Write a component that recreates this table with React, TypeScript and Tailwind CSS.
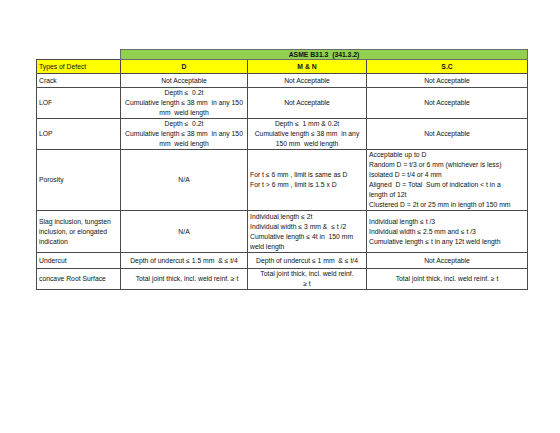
import React from "react";

const cell = "border border-[#4a4a4a] px-[2px] leading-[10px]";

function Lines({ lines }: { lines: string[] }) {
  return (
    <>
      {lines.map((l, i) => (
        <div key={i} className="whitespace-pre">
          {l}
        </div>
      ))}
    </>
  );
}

export default function App() {
  return (
    <div
      className="w-[560px] h-[433px] bg-white text-[#111] text-[6.8px] pt-[49px] pl-[36px]"
      style={{ fontFamily: '"Liberation Sans", Arial, sans-serif' }}
    >
      <table className="border-collapse table-fixed w-[491px]">
        <colgroup>
          <col className="w-[84px]" />
          <col className="w-[127px]" />
          <col className="w-[119px]" />
          <col className="w-[161px]" />
        </colgroup>
        <tbody>
          <tr className="h-[10px]">
            <td className="p-0" />
            <td
              colSpan={3}
              className="border border-[#6b6b6b] bg-[#92d050] text-center font-bold leading-[9px]"
            >
              ASME B31.3&nbsp; (341.3.2)
            </td>
          </tr>
          <tr className="h-[14px] bg-[#ffff00]">
            <td className={`${cell} font-normal`}>Types of Defect</td>
            <td className={`${cell} text-center font-bold`}>D</td>
            <td className={`${cell} text-center font-bold`}>M &amp; N</td>
            <td className={`${cell} text-center font-bold`}>S.C</td>
          </tr>
          <tr className="h-[14px]">
            <td className={cell}>Crack</td>
            <td className={`${cell} text-center`}>Not Acceptable</td>
            <td className={`${cell} text-center`}>Not Acceptable</td>
            <td className={`${cell} text-center`}>Not Acceptable</td>
          </tr>
          <tr className="h-[30px]">
            <td className={cell}>LOF</td>
            <td className={`${cell} text-center`}>
              <Lines lines={["Depth ≤  0.2t", "Cumulative length ≤ 38 mm  in any 150", "mm  weld length"]} />
            </td>
            <td className={`${cell} text-center`}>Not Acceptable</td>
            <td className={`${cell} text-center`}>Not Acceptable</td>
          </tr>
          <tr className="h-[31px]">
            <td className={cell}>LOP</td>
            <td className={`${cell} text-center`}>
              <Lines lines={["Depth ≤  0.2t", "Cumulative length ≤ 38 mm  in any 150", "mm  weld length"]} />
            </td>
            <td className={`${cell} text-center`}>
              <Lines lines={["Depth ≤  1 mm & 0.2t", "Cumulative length ≤ 38 mm  in any", "150 mm  weld length"]} />
            </td>
            <td className={`${cell} text-center`}>Not Acceptable</td>
          </tr>
          <tr className="h-[61px]">
            <td className={cell}>Porosity</td>
            <td className={`${cell} text-center`}>N/A</td>
            <td className={cell}>
              <Lines lines={["For t ≤ 6 mm , limit is same as D", "For t > 6 mm , limit is 1.5 x D"]} />
            </td>
            <td className={cell}>
              <Lines
                lines={[
                  "Acceptable up to D",
                  "Random D = t/3 or 6 mm (whichever is less)",
                  "Isolated D = t/4 or 4 mm",
                  "Aligned  D = Total  Sum of indication < t in a",
                  "length of 12t",
                  "Clustered D = 2t or 25 mm in length of 150 mm",
                ]}
              />
            </td>
          </tr>
          <tr className="h-[42px]">
            <td className={cell}>
              <Lines lines={["Slag inclusion, tungsten", "inclusion, or elongated", "indication"]} />
            </td>
            <td className={`${cell} text-center`}>N/A</td>
            <td className={cell}>
              <Lines
                lines={[
                  "Individual length ≤ 2t",
                  "Individual width ≤ 3 mm &  ≤ t /2",
                  "Cumulative length ≤ 4t in  150 mm",
                  "weld length",
                ]}
              />
            </td>
            <td className={cell}>
              <Lines
                lines={[
                  "Individual length ≤ t /3",
                  "Individual width ≤ 2.5 mm and ≤ t /3",
                  "Cumulative length ≤ t in any 12t weld length",
                ]}
              />
            </td>
          </tr>
          <tr className="h-[16px]">
            <td className={cell}>Undercut</td>
            <td className={`${cell} text-center whitespace-pre`}>Depth of undercut ≤ 1.5 mm  &amp; ≤ t/4</td>
            <td className={`${cell} text-center whitespace-pre`}>Depth of undercut ≤ 1 mm  &amp; ≤ t/4</td>
            <td className={`${cell} text-center`}>Not Acceptable</td>
          </tr>
          <tr className="h-[20px]">
            <td className={cell}>concave Root Surface</td>
            <td className={`${cell} text-center pl-[8px]`}>Total joint thick, incl. weld reinf. ≥ t</td>
            <td className={`${cell} text-center align-top`}>
              <Lines lines={["Total joint thick, incl. weld reinf.", "≥ t"]} />
            </td>
            <td className={`${cell} text-center`}>Total joint thick, incl. weld reinf. ≥ t</td>
          </tr>
        </tbody>
      </table>
    </div>
  );
}
